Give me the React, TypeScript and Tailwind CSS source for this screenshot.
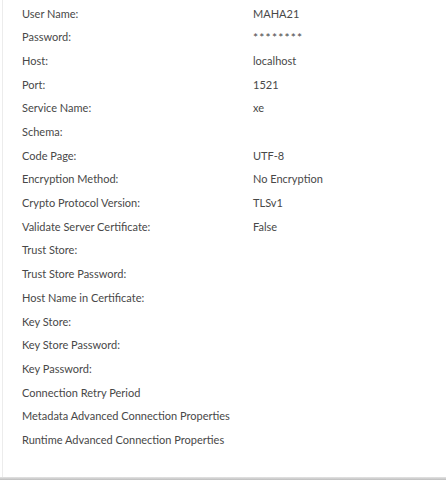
const rows: [string, string][] = [
  ["User Name:", "MAHA21"],
  ["Password:", "********"],
  ["Host:", "localhost"],
  ["Port:", "1521"],
  ["Service Name:", "xe"],
  ["Schema:", ""],
  ["Code Page:", "UTF-8"],
  ["Encryption Method:", "No Encryption"],
  ["Crypto Protocol Version:", "TLSv1"],
  ["Validate Server Certificate:", "False"],
  ["Trust Store:", ""],
  ["Trust Store Password:", ""],
  ["Host Name in Certificate:", ""],
  ["Key Store:", ""],
  ["Key Store Password:", ""],
  ["Key Password:", ""],
  ["Connection Retry Period", ""],
  ["Metadata Advanced Connection Properties", ""],
  ["Runtime Advanced Connection Properties", ""],
];

export default function App() {
  return (
    <div className="w-[446px] h-[480px] bg-white flex flex-col overflow-hidden font-['Lato',sans-serif]">
      <div className="flex-1 ml-[2px] border-l border-[#ececec] pt-[2px]">
        {rows.map(([label, value]) => (
          <div
            key={label}
            className="flex items-center h-[23.7px] text-[11px] text-[#484848]"
          >
            <span className="w-[250px] pl-[19px] shrink-0">{label}</span>
            <span
              className={
                value.startsWith("*") ? "tracking-[1.2px] text-[12px]" : ""
              }
            >
              {value}
            </span>
          </div>
        ))}
      </div>
      <div className="h-[3px] bg-gradient-to-b from-[#e4e4e4] to-[#bdbdbd]" />
    </div>
  );
}
